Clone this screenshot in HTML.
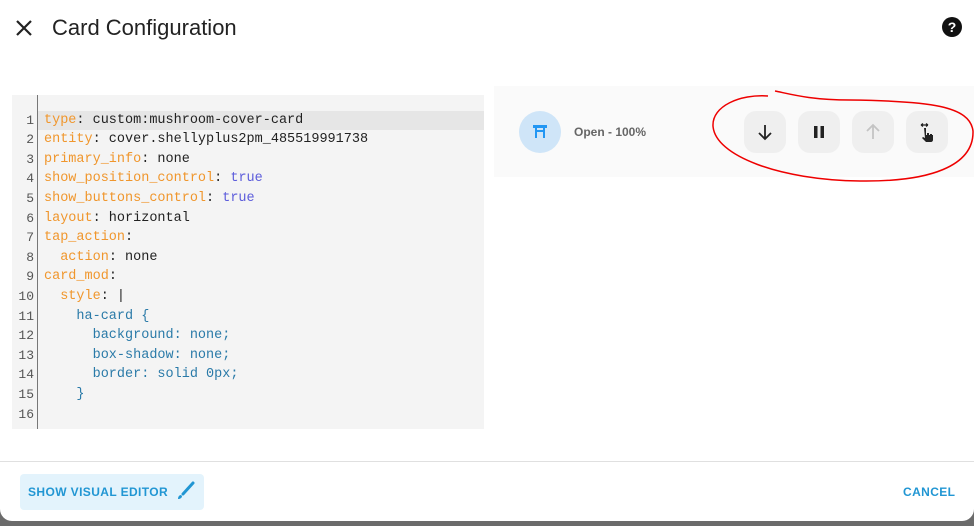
<!DOCTYPE html>
<html><head><style>
*{margin:0;padding:0;box-sizing:border-box}
body{width:974px;height:526px;background:#6b6b6b;font-family:"Liberation Sans",sans-serif;position:relative;overflow:hidden}
.dlg{position:absolute;left:0;top:0;width:974px;height:521px;background:#fff;border-radius:0 0 12px 12px}
.code{position:absolute;left:12px;top:95px;width:472px;height:334px;background:#f4f4f4;font-family:"Liberation Mono",monospace;font-size:13.5px}
.gut{position:absolute;left:25px;top:0;width:1px;height:334px;background:#777}
.ln{position:absolute;left:0;width:472px;height:19.6px;line-height:19.6px}
.ln .n{position:absolute;left:0;width:22px;text-align:right;color:#555;font-size:13px}
.ln .t{position:absolute;left:32px;color:#222;white-space:pre}
.ln .k{color:#f0962c}.ln .b{color:#5c5cdb}.ln .c{color:#2a7aa8}
.card{position:absolute;left:494px;top:86px;width:480px;height:91px;background:#fafafa}
.btn{position:absolute;top:25px;width:42px;height:42px;background:#efefef;border-radius:12px}
</style></head><body>
<div class="dlg">
<svg style="position:absolute;left:14px;top:18px" width="20" height="20" viewBox="0 0 20 20"><path d="M3 3L17 17M17 3L3 17" stroke="#222" stroke-width="2.2"/></svg>
<div style="position:absolute;left:52px;top:15px;font-size:22px;color:#222">Card Configuration</div>
<svg style="position:absolute;left:942px;top:17px" width="20" height="20" viewBox="0 0 20 20"><circle cx="10" cy="10" r="10" fill="#111"/><text x="10" y="15" text-anchor="middle" font-family="Liberation Sans" font-weight="bold" font-size="14" fill="#fff">?</text></svg>

<div class="code">
<div class="gut"></div>
<div style="position:absolute;left:26px;top:15.5px;width:446px;height:19.6px;background:#e6e6e6"></div>
<div class="ln" style="top:15.5px"><span class="n">1</span><span class="t"><span class="k">type</span>: custom:mushroom-cover-card</span></div>
<div class="ln" style="top:35.1px"><span class="n">2</span><span class="t"><span class="k">entity</span>: cover.shellyplus2pm_485519991738</span></div>
<div class="ln" style="top:54.7px"><span class="n">3</span><span class="t"><span class="k">primary_info</span>: none</span></div>
<div class="ln" style="top:74.3px"><span class="n">4</span><span class="t"><span class="k">show_position_control</span>: <span class="b">true</span></span></div>
<div class="ln" style="top:93.9px"><span class="n">5</span><span class="t"><span class="k">show_buttons_control</span>: <span class="b">true</span></span></div>
<div class="ln" style="top:113.5px"><span class="n">6</span><span class="t"><span class="k">layout</span>: horizontal</span></div>
<div class="ln" style="top:133.1px"><span class="n">7</span><span class="t"><span class="k">tap_action</span>:</span></div>
<div class="ln" style="top:152.7px"><span class="n">8</span><span class="t">  <span class="k">action</span>: none</span></div>
<div class="ln" style="top:172.3px"><span class="n">9</span><span class="t"><span class="k">card_mod</span>:</span></div>
<div class="ln" style="top:191.9px"><span class="n">10</span><span class="t">  <span class="k">style</span>: |</span></div>
<div class="ln" style="top:211.5px"><span class="n">11</span><span class="t"><span class="c">    ha-card {</span></span></div>
<div class="ln" style="top:231.1px"><span class="n">12</span><span class="t"><span class="c">      background: none;</span></span></div>
<div class="ln" style="top:250.7px"><span class="n">13</span><span class="t"><span class="c">      box-shadow: none;</span></span></div>
<div class="ln" style="top:270.3px"><span class="n">14</span><span class="t"><span class="c">      border: solid 0px;</span></span></div>
<div class="ln" style="top:289.9px"><span class="n">15</span><span class="t"><span class="c">    }</span></span></div>
<div class="ln" style="top:309.5px"><span class="n">16</span><span class="t"></span></div>
</div>

<div class="card">
<div style="position:absolute;left:25px;top:25px;width:42px;height:42px;border-radius:50%;background:#cfe5f8"></div>
<svg style="position:absolute;left:36px;top:36px" width="20" height="20" viewBox="0 0 20 20"><rect x="3" y="3" width="14" height="3" fill="#2196f3"/><rect x="5" y="8" width="10" height="2" fill="#2196f3"/><rect x="5" y="6" width="2" height="10" fill="#2196f3"/><rect x="13" y="6" width="2" height="10" fill="#2196f3"/></svg>
<div style="position:absolute;left:80px;top:39px;font-size:12px;font-weight:bold;color:#666">Open - 100%</div>
<div class="btn" style="left:250px"><svg width="42" height="42" viewBox="0 0 42 42"><path d="M21 14V28M15 22L21 28L27 22" stroke="#222" stroke-width="1.8" fill="none"/></svg></div>
<div class="btn" style="left:304px"><svg width="42" height="42" viewBox="0 0 42 42"><rect x="16" y="15" width="3.5" height="12" fill="#222"/><rect x="22.5" y="15" width="3.5" height="12" fill="#222"/></svg></div>
<div class="btn" style="left:358px"><svg width="42" height="42" viewBox="0 0 42 42"><path d="M21 28V14M15 20L21 14L27 20" stroke="#c4c4c4" stroke-width="1.8" fill="none"/></svg></div>
<div class="btn" style="left:412px"><svg width="42" height="42" viewBox="0 0 42 42"><path d="M15 14H22M15 14l2-1.5M15 14l2 1.5M22 14l-2-1.5M22 14l-2 1.5" stroke="#222" stroke-width="1.2" fill="none"/><path d="M18 17h2v7h1v-2h2v2h1v-1h2v1h1v5c0 1-1 2-2 2h-5l-4-4 1-1 2 1z" fill="#222"/></svg></div>
</div>
<svg style="position:absolute;left:700px;top:86px" width="274" height="100" viewBox="0 0 274 100"><path d="M68 10C40 8 12 20 13 40 15 70 80 94 160 95 230 96 274 80 273 45 270 20 230 15 150 14 110 14 90 8 75 5" stroke="#e00" stroke-width="1.5" fill="none"/></svg>

<div style="position:absolute;left:0;top:461px;width:974px;height:1px;background:#e0e0e0"></div>
<div style="position:absolute;left:20px;top:474px;width:184px;height:36px;background:#e3f3fc;border-radius:4px"></div>
<div style="position:absolute;left:28px;top:485px;font-size:12px;font-weight:bold;letter-spacing:0.4px;color:#2196d3">SHOW VISUAL EDITOR</div>
<svg style="position:absolute;left:174px;top:480px" width="22" height="22" viewBox="0 0 22 22"><path d="M19 3L9 14" stroke="#2196d3" stroke-width="3" stroke-linecap="round"/><path d="M7 15c-2 0-3 2-3 4 2 0 4-1 4-3z" fill="#2196d3"/></svg>
<div style="position:absolute;left:903px;top:485px;font-size:12px;font-weight:bold;letter-spacing:0.4px;color:#2196d3">CANCEL</div>
</div>
</body></html>
